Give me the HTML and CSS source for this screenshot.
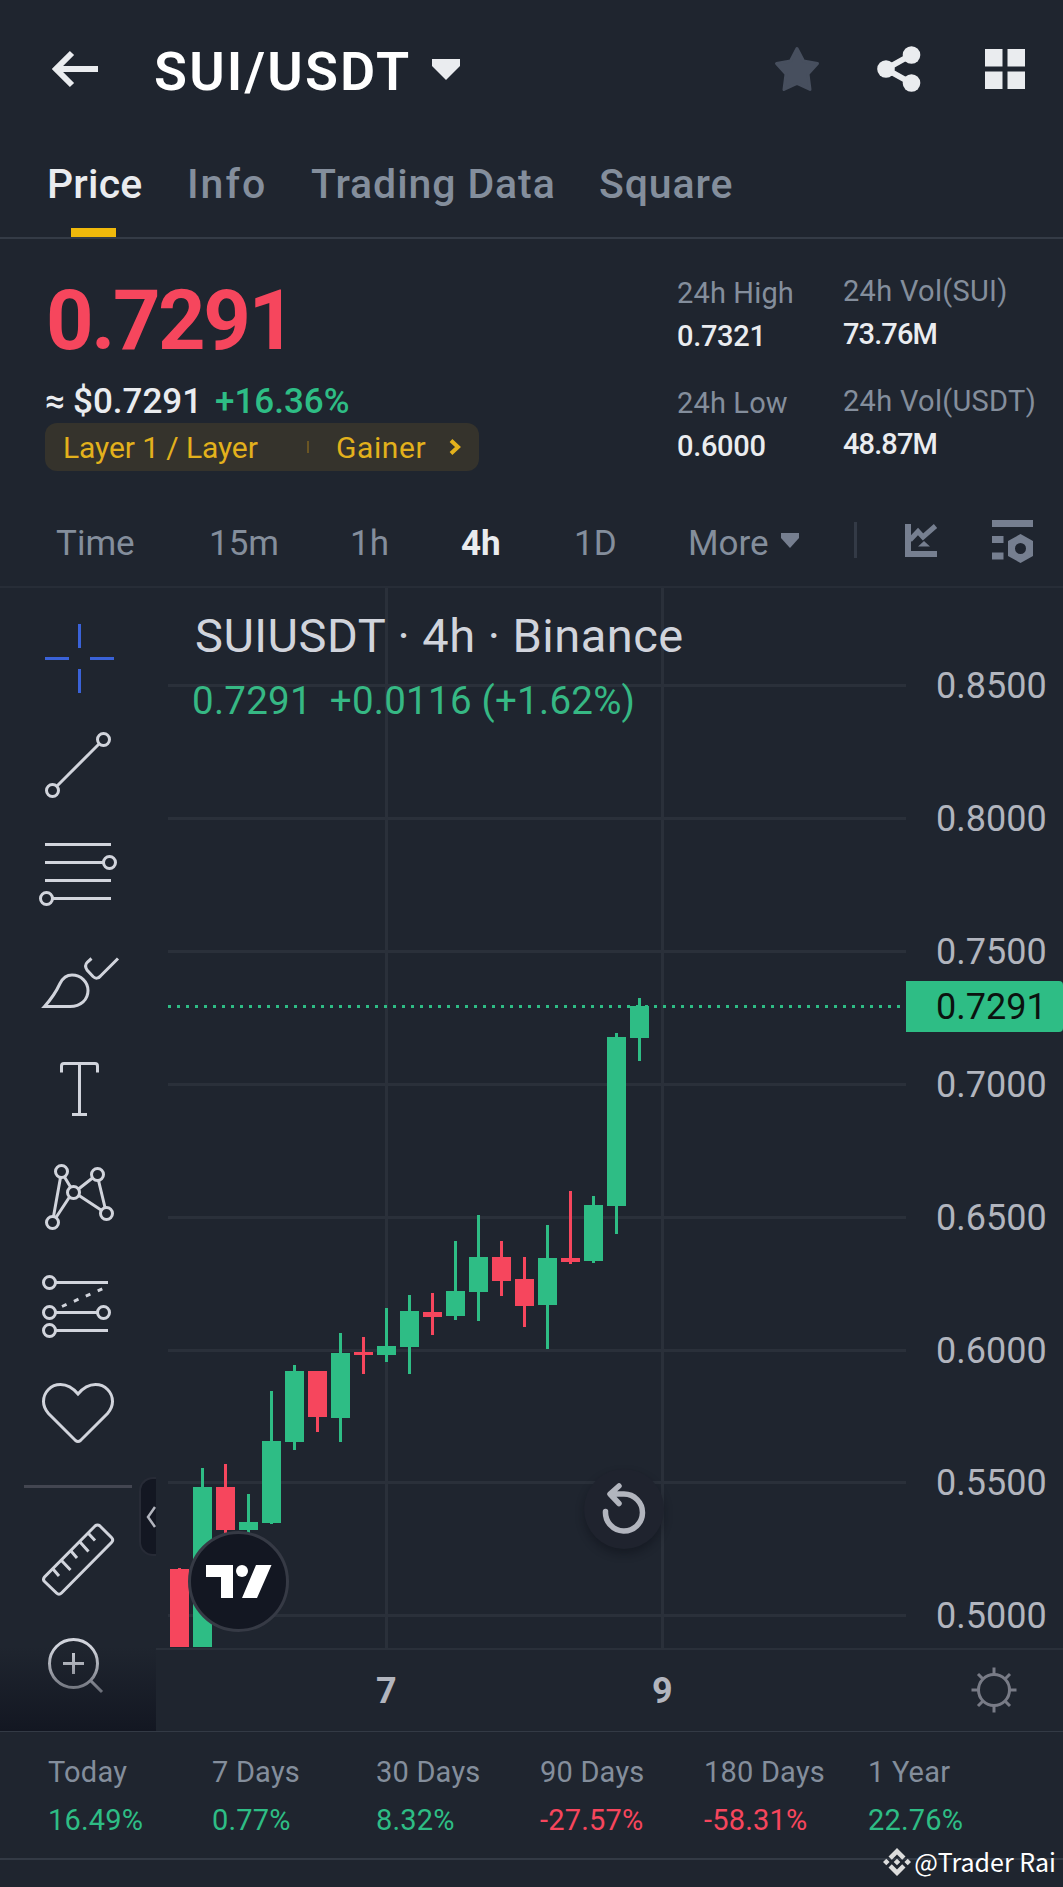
FILE: index.html
```html
<!DOCTYPE html>
<html lang="en">
<head>
    <meta charset="UTF-8">
    <meta name="viewport" content="width=device-width, initial-scale=1.0">
    <title>SUI/USDT</title>
    <link rel="stylesheet" href="styles.css">
</head>
<body>
    <header class="header">
        <svg class="back" width="46" height="38" viewBox="0 0 46 38">
            <path d="M46 19H5M20 3L4 19L20 35" />
        </svg>
        <h1 class="pair">SUI/USDT</h1>
        <svg class="caret" width="28" height="21" viewBox="0 0 28 21">
            <path d="M0 0H28V7L14 21L0 7Z" />
        </svg>
        <div class="header-icons">
            <svg class="star" width="46" height="46" viewBox="0 0 46 46">
                <path d="M23 2.500L29.500 15L43.500 17.500L34 28L36 43.500L23 37.500L10 43.500L12 28L2.500 17.500L16.500 15Z" />
            </svg>
            <svg class="share" width="44" height="46" viewBox="0 0 44 46">
                <path d="M34 9L9 23L34 37" />
                <circle cx="34.500" cy="9" r="8.800" />
                <circle cx="9" cy="23" r="8.800" />
                <circle cx="34.500" cy="37" r="8.800" />
            </svg>
            <svg class="grid-icon" width="40" height="40" viewBox="0 0 40 40">
                <path d="M0 0H17.500V17.500H0ZM22.500 0H40V17.500H22.500ZM0 22.500H17.500V40H0ZM22.500 22.500H40V40H22.500Z" />
            </svg>
        </div>
    </header>

    <nav class="tabs">
        <div class="tab active">Price</div>
        <div class="tab info">Info</div>
        <div class="tab">Trading Data</div>
        <div class="tab">Square</div>
    </nav>

    <section class="summary">
        <div class="quote">
            <div class="price">0.7291</div>
            <div class="fiat">
                <span>≈</span>
                <span>$0.7291</span>
                <span class="up">+16.36%</span>
            </div>
            <div class="tag">
                <span class="tag-name">Layer 1 / Layer</span>
                <span class="tag-line"></span>
                <span class="tag-gainer">Gainer</span>
                <svg width="12" height="16" viewBox="0 0 12 16"><path d="M2 1.500L9 8L2 14.500" /></svg>
            </div>
        </div>
        <div class="stats">
            <div class="label">24h High</div>
            <div class="value">0.7321</div>
            <div class="label">24h Low</div>
            <div class="value">0.6000</div>
        </div>
        <div class="stats volume">
            <div class="label">24h Vol(SUI)</div>
            <div class="value">73.76M</div>
            <div class="label">24h Vol(USDT)</div>
            <div class="value">48.87M</div>
        </div>
    </section>

    <section class="intervals">
        <span>Time</span>
        <span>15m</span>
        <span>1h</span>
        <span class="selected">4h</span>
        <span>1D</span>
        <span>More</span>
        <svg class="more-caret" width="18" height="15" viewBox="0 0 18 15"><path d="M0 0H18V5L9 15L0 5Z" /></svg>
        <i class="bar"></i>
        <svg class="chart-icon" width="33" height="33" viewBox="0 0 33 33">
            <path class="fill" d="M0 0H6V27H32V33H0Z" />
            <path class="line" d="M5 16L13 7.500L18 13L30.500 2" />
            <path class="fill" d="M19 17L25 22.500H13Z" />
        </svg>
        <svg class="settings-icon" width="42" height="44" viewBox="0 0 42 44">
            <path fill-rule="evenodd" d="M0 0H41V7H0ZM0 16H11.500V23H0ZM0 32.500H11.500V39.500H0ZM28.500 14L41 21V36L28.500 43L16 36V21ZM28.500 23A5.500 5.500 0 1 0 28.500 34A5.500 5.500 0 1 0 28.500 23Z" />
        </svg>
    </section>

    <main class="chart">
        <aside class="toolbar">
            <!-- Crosshair -->
            <svg class="tool cross" viewBox="0 0 156 108"><path d="M45 54.500H69M90 54.500H114M79.500 20V44M79.500 65V89" /></svg>
            <!-- Trend line -->
            <svg class="tool" viewBox="0 0 156 108">
                <path d="M57 74L99 32" /><circle cx="103.500" cy="27.500" r="6" /><circle cx="52.500" cy="78.500" r="6" />
            </svg>
            <!-- Fibonacci -->
            <svg class="tool" viewBox="0 0 156 108">
                <path d="M45 24.500H111M45 42.500H103.500M45 60.500H111M52.500 78.500H111" /><circle cx="109.500" cy="42.500" r="6" /><circle cx="46.500" cy="78.500" r="6" />
            </svg>
            <!-- Brush -->
            <svg class="tool" viewBox="0 0 156 108">
                <path d="M44.500 78.500C54 68 57 62 60 55.500C63 49.500 67 47 72 47C81 47 88 54 88 62.500C88 71.500 81 78.500 70 78.500Z" />
                <path d="M91.500 30.500L87.500 34C85.500 36 85 39 87 42L93 48.500C95.500 51 98.500 50.500 100.500 48L118 30.500" />
            </svg>
            <!-- Text -->
            <svg class="tool" viewBox="0 0 156 108"><path d="M61.500 36.500V30Q61.500 27.500 64 27.500H95Q97.500 27.500 97.500 30V36.500M79.500 27.500V78.500M72 78.500H87" /></svg>
            <!-- Pattern -->
            <svg class="tool" viewBox="0 0 156 108">
                <path d="M60.500 33.500L53.500 72.500M64.500 33L70.500 43M69.500 53L56 73.500M78.500 45L92.500 34M98.500 36.500L105 63.500M79 51.500L101 66" />
                <circle cx="61.500" cy="27.500" r="6" /><circle cx="97.500" cy="30.500" r="6" /><circle cx="73.500" cy="48.500" r="6" /><circle cx="52.500" cy="78.500" r="6" /><circle cx="106.500" cy="69.500" r="6" />
            </svg>
            <!-- Forecast -->
            <svg class="tool" viewBox="0 0 156 108">
                <path d="M55.500 30.500H108M55.500 60.500H97.500M55.500 78.500H108" />
                <path stroke-dasharray="5 8" d="M62 54.500L104 36" />
                <circle cx="49.500" cy="30.500" r="6" /><circle cx="49.500" cy="60.500" r="6" /><circle cx="103.500" cy="60.500" r="6" /><circle cx="49.500" cy="78.500" r="6" />
            </svg>
            <!-- Heart -->
            <svg class="tool" viewBox="0 0 156 108">
                <path d="M78 34C73 28 67.500 24.500 60.500 24.500C51 24.500 43.500 32 43.500 41.500C43.500 46 45.500 50 48.500 53.500L75.500 80.500Q78 82.500 80.500 80.500L107.500 53.500C110.500 50 112.500 46 112.500 41.500C112.500 32 105 24.500 95.500 24.500C88.500 24.500 83 28 78 34Z" />
            </svg>
            <hr class="tool-line">
            <!-- Ruler -->
            <svg class="tool" viewBox="0 0 156 108">
                <path d="M95 20Q97.500 18 100 20L111.500 31.500Q114 34 111.500 36.500L61.500 87Q59 89.500 56.500 87L44.500 75.500Q42.500 73.500 44.500 71Z" />
                <path d="M88.500 27.500L95 34.500M80 36L88.500 45.500M71 45L77 52M61.500 54.500L70.500 64M53 63L59 70" />
            </svg>
            <!-- Zoom in -->
            <svg class="tool" viewBox="0 0 156 108">
                <circle cx="73.500" cy="49.500" r="24" /><path d="M63 49.500H84M73.500 39V60M91 67L102 78" />
            </svg>
            <div class="fade"></div>
            <div class="handle">
                <svg width="10" height="22" viewBox="0 0 10 22"><path d="M9 1L2 11L9 21" /></svg>
            </div>
        </aside>

        <div class="board">
            <div class="plot-row">
                <div class="plot">
                    <svg id="plot" width="750" height="1062" viewBox="156 586 750 1062"></svg>
                    <div class="legend">
                        <div class="legend-title">SUIUSDT · 4h · Binance</div>
                        <div class="legend-values"><span>0.7291</span><span>+0.0116 (+1.62%)</span></div>
                    </div>
                    <div class="tv-logo">
                        <svg width="66" height="33" viewBox="0 0 66 33">
                            <path d="M0 0H27V33H15V12H0ZM50 0H65.500L51 33H36Z" /><circle cx="36" cy="6" r="6" />
                        </svg>
                    </div>
                    <div class="reset">
                        <svg width="44" height="52" viewBox="0 0 44 52">
                            <path d="M3.500 28.500A18.500 18.500 0 1 0 22 11H9M17 3L8 11L17 20.500" />
                        </svg>
                    </div>
                </div>
                <div class="scale">
                    <span>0.8500</span>
                    <span>0.8000</span>
                    <span>0.7500</span>
                    <span>0.7000</span>
                    <span>0.6500</span>
                    <span>0.6000</span>
                    <span>0.5500</span>
                    <span>0.5000</span>
                    <div class="last-price">0.7291</div>
                </div>
            </div>
            <div class="time-row">
                <b>7</b>
                <b>9</b>
                <svg width="46" height="46" viewBox="0 0 46 46">
                    <circle cx="23" cy="23" r="15.500" />
                    <path d="M23 0.500V8M23 38V45.500M0.500 23H8M38 23H45.500M7 7L12 12M34 34L39 39M39 7L34 12M12 34L7 39" />
                </svg>
            </div>
        </div>
    </main>

    <section class="performance">
        <div><div class="label">Today</div><div class="up">16.49%</div></div>
        <div><div class="label">7 Days</div><div class="up">0.77%</div></div>
        <div><div class="label">30 Days</div><div class="up">8.32%</div></div>
        <div><div class="label">90 Days</div><div class="down">-27.57%</div></div>
        <div><div class="label">180 Days</div><div class="down">-58.31%</div></div>
        <div><div class="label">1 Year</div><div class="up">22.76%</div></div>
    </section>

    <div class="author">
        <svg width="28" height="28" viewBox="0 0 28 28">
            <path d="M14 0L22.500 8.500L19.200 11.800L14 6.600L8.800 11.800L5.500 8.500ZM14 28L22.500 19.500L19.200 16.200L14 21.400L8.800 16.200L5.500 19.500ZM3.300 10.700L6.600 14L3.300 17.300L0 14ZM24.700 10.700L28 14L24.700 17.300L21.400 14ZM14 10.700L17.300 14L14 17.300L10.700 14Z" />
        </svg>
        <span>@Trader Rai</span>
    </div>

    <script>
        const GREEN = '#2ebd85';
        const RED = '#f6465d';

        // [color, high, body top, body bottom, low]
        const candles = [
            [RED, 1568, 1569, 1647, 1647],
            [GREEN, 1468, 1487, 1647, 1647],
            [RED, 1464, 1487, 1530, 1535],
            [GREEN, 1494, 1522, 1530, 1534],
            [GREEN, 1391, 1441, 1523, 1524],
            [GREEN, 1365, 1371, 1442, 1450],
            [RED, 1371, 1371, 1417, 1432],
            [GREEN, 1333, 1353, 1418, 1442],
            [RED, 1337, 1352, 1355, 1374],
            [GREEN, 1308, 1346, 1355, 1362],
            [GREEN, 1295, 1311, 1347, 1374],
            [RED, 1293, 1312, 1317, 1335],
            [GREEN, 1241, 1291, 1316, 1320],
            [GREEN, 1215, 1257, 1292, 1321],
            [RED, 1241, 1257, 1281, 1296],
            [RED, 1257, 1279, 1306, 1327],
            [GREEN, 1225, 1258, 1305, 1349],
            [RED, 1191, 1258, 1262, 1264],
            [GREEN, 1196, 1205, 1261, 1263],
            [GREEN, 1033, 1037, 1206, 1234],
            [GREEN, 998, 1006, 1038, 1061]
        ];

        let shapes = '';

        // Grid lines
        for (let i = 0; i < 8; i++) {
            const y = 684 + Math.round(i * 132.9);
            shapes += `<rect class="grid" x="168" y="${y}" width="738" height="3"/>`;
        }
        for (const x of [385, 661]) {
            shapes += `<rect class="grid" x="${x}" y="588" width="3" height="1060"/>`;
        }

        // Last price line
        shapes += `<path stroke="${GREEN}" stroke-width="3" stroke-dasharray="3 6" d="M168 1006.5H902"/>`;

        // Candles
        candles.forEach(([color, high, top, bottom, low], i) => {
            const x = 170 + i * 23;
            shapes += `<rect x="${x + 8}" y="${high}" width="3" height="${low - high}" fill="${color}"/>`;
            shapes += `<rect x="${x}" y="${top}" width="19" height="${bottom - top}" fill="${color}"/>`;
        });

        document.getElementById('plot').innerHTML = shapes;
    </script>
</body>
</html>
```
FILE: styles.css
```css
* {
    margin: 0;
    padding: 0;
    box-sizing: border-box;
}

body {
    position: relative;
    width: 1063px;
    height: 1887px;
    overflow: hidden;
    background: #1f252f;
    color: #eaecef;
    font-family: Roboto, "Liberation Sans", sans-serif;
}

svg {
    display: block;
    flex: none;
}

.up { color: #2ebd85; }
.down { color: #f6465d; }
.label { color: #848e9c; }

/* Header */
.header {
    display: flex;
    align-items: center;
    height: 138px;
    padding: 0 38px 0 52px;
}

.back path {
    fill: none;
    stroke: #eaecef;
    stroke-width: 6;
}

.pair {
    margin: 6px 0 0 56px;
    font-size: 54px;
    line-height: 60px;
    font-weight: 600;
    letter-spacing: 2.2px;
    color: #fff;
}

.caret {
    margin-left: 21px;
    fill: #eaecef;
}

.header-icons {
    display: flex;
    align-items: center;
    margin-left: auto;
}

.star {
    fill: #474f5e;
    stroke: #474f5e;
    stroke-width: 3;
    stroke-linejoin: round;
    margin-right: 57px;
}

.share {
    fill: #eaecef;
    margin-right: 64px;
}

.share path {
    fill: none;
    stroke: #eaecef;
    stroke-width: 6;
}

.grid-icon { fill: #eaecef; }

/* Tabs */
.tabs {
    display: grid;
    grid-template-columns: 140px 124px 288px auto;
    height: 101px;
    padding-left: 47px;
    border-bottom: 2px solid #343b46;
}

.tab {
    position: relative;
    font-size: 41px;
    line-height: 92px;
    font-weight: 500;
    letter-spacing: 0.9px;
    color: #848e9c;
}

.tab.info { letter-spacing: 2px; }

.tab.active {
    color: #eaecef;
    letter-spacing: 0.2px;
}

.tab.active::after {
    content: "";
    position: absolute;
    left: 24px;
    bottom: 0;
    width: 45px;
    height: 9px;
    background: #f0b90b;
}

/* Price and 24h stats */
.summary {
    display: flex;
    height: 260px;
    padding: 32px 0 0 45px;
}

.quote { width: 632px; }

.price {
    padding-left: 1px;
    font-size: 83px;
    line-height: 100px;
    font-weight: 700;
    letter-spacing: -2.4px;
    color: #f6465d;
}

.fiat {
    display: grid;
    grid-template-columns: 28px 142px auto;
    margin-top: 9px;
    font-size: 35px;
    line-height: 44px;
    font-weight: 500;
}

.tag {
    display: flex;
    align-items: center;
    width: 434px;
    height: 48px;
    margin-top: -1px;
    padding-left: 18px;
    border-radius: 12px;
    background: #35332c;
    color: #e3b11c;
    font-size: 30px;
}

.tag-name {
    width: 244px;
    letter-spacing: -0.1px;
}

.tag-line {
    width: 2px;
    height: 12px;
    margin-right: 27px;
    background: #6a5523;
}

.tag-gainer {
    width: 113px;
    letter-spacing: 0.6px;
}

.tag svg path {
    fill: none;
    stroke: #e3b11c;
    stroke-width: 4;
}

.stats {
    width: 166px;
    padding-top: 1px;
    font-size: 29px;
    line-height: 43px;
    white-space: nowrap;
    letter-spacing: 0.15px;
}

.stats .value {
    margin-bottom: 24px;
    font-weight: 500;
    letter-spacing: -0.3px;
}

.volume {
    margin-top: -2px;
    letter-spacing: 0.3px;
}

.volume .value { letter-spacing: -0.9px; }

/* Interval picker */
.intervals {
    display: grid;
    grid-template-columns: 153px 141px 111px 113px 114px 93px 73px 51px 87px auto;
    align-items: center;
    height: 87px;
    padding-left: 56px;
    font-size: 35px;
    color: #848e9c;
}

.intervals span { padding-top: 1px; }

.intervals .selected {
    font-weight: 700;
    color: #eaecef;
}

.more-caret {
    fill: #767f90;
    margin-bottom: 5px;
}

.bar {
    width: 3px;
    height: 36px;
    margin-bottom: 5px;
    background: #333a46;
}

.chart-icon {
    margin-bottom: 5px;
}

.chart-icon .fill { fill: #767f90; }

.chart-icon .line {
    fill: none;
    stroke: #767f90;
    stroke-width: 5;
}

.settings-icon {
    fill: #767f90;
    margin-bottom: 2px;
}

/* Chart */
.chart {
    display: flex;
    height: 1145px;
    border-top: 2px solid #272d37;
}

.toolbar {
    position: relative;
    width: 156px;
    padding-top: 16px;
}

.tool {
    width: 156px;
    height: 108px;
    fill: none;
    stroke: #d1d4dc;
    stroke-width: 3;
}

.tool.cross { stroke: #3a62d8; }

.tool-line {
    width: 108px;
    height: 3px;
    margin: 17px 0 18px 24px;
    border: none;
    background: #434651;
}

/* Fades the tools out at the bottom of the list */
.fade {
    position: absolute;
    left: 0;
    bottom: 0;
    width: 156px;
    height: 84px;
    background: linear-gradient(rgba(19, 23, 34, 0), #131722);
}

.handle {
    position: absolute;
    right: 0;
    top: 889px;
    display: flex;
    align-items: center;
    justify-content: flex-end;
    width: 17px;
    height: 79px;
    border: 2px solid #272b36;
    border-right: none;
    border-radius: 14px 0 0 14px;
    background: #131722;
}

.handle path {
    fill: none;
    stroke: #b2b5be;
    stroke-width: 2.5;
}

.board {
    flex: 1;
    display: flex;
    flex-direction: column;
}

.plot-row {
    display: flex;
    height: 1062px;
    border-bottom: 2px solid #2a303a;
}

.plot {
    position: relative;
    width: 750px;
}

.plot svg { overflow: hidden; }

#plot {
    margin-top: -2px;
    fill: none;
}

.grid { fill: #2a303a; }

.legend {
    position: absolute;
    left: 36px;
    top: 20px;
    white-space: nowrap;
}

.legend-title {
    padding-left: 3px;
    font-size: 47px;
    line-height: 56px;
    letter-spacing: 0.48px;
    color: #d1d4dc;
}

.legend-values {
    display: flex;
    gap: 18px;
    padding: 11px 0 0 0;
    font-size: 38.5px;
    line-height: 52px;
    letter-spacing: 0.25px;
    color: #36b884;
}

.tv-logo {
    position: absolute;
    left: 32px;
    top: 943px;
    display: flex;
    align-items: center;
    justify-content: center;
    width: 101px;
    height: 101px;
    border: 3px solid #363a45;
    border-radius: 50%;
    background: #131722;
    fill: #fff;
}

.reset {
    position: absolute;
    left: 428px;
    top: 881px;
    display: flex;
    align-items: center;
    justify-content: center;
    width: 80px;
    height: 80px;
    border-radius: 50%;
    background: #1f232e;
    box-shadow: 0 5px 8px rgba(10, 12, 20, 0.4);
}

.reset path {
    fill: none;
    stroke: #b2b5be;
    stroke-width: 5.5;
    stroke-linecap: round;
    stroke-linejoin: round;
}

/* Price scale */
.scale {
    position: relative;
    flex: 1;
    padding-top: 32px;
    font-size: 36px;
    line-height: 132.9px;
    color: #b2b5be;
}

.scale span {
    display: block;
    padding-left: 30px;
}

.last-price {
    position: absolute;
    left: 0;
    top: 393px;
    width: 157px;
    height: 51px;
    padding-left: 30px;
    border-radius: 0 4px 4px 0;
    background: #2ebd85;
    color: #0b120f;
    line-height: 53px;
}

/* Time scale */
.time-row {
    flex: 1;
    display: grid;
    grid-template-columns: 276px 293px auto;
    align-items: center;
    padding-left: 220px;
    font-size: 36px;
    color: #b2b5be;
}

.time-row svg {
    margin: 0 0 2px 26px;
    fill: none;
    stroke: #787b86;
    stroke-width: 3;
}

/* Performance */
.performance {
    display: grid;
    grid-template-columns: repeat(6, 164px);
    height: 129px;
    padding: 16px 0 0 48px;
    border-top: 1px solid #333a45;
    border-bottom: 2px solid #333a45;
    font-size: 29px;
    line-height: 48px;
    letter-spacing: 0.2px;
}

/* Author mark */
.author {
    position: absolute;
    right: 7px;
    bottom: 8px;
    display: flex;
    align-items: center;
    gap: 3px;
    font-family: "Noto Sans CJK SC", "Noto Sans", sans-serif;
    font-size: 25px;
    line-height: 36px;
    color: #fff;
}

.author svg {
    margin-top: 2px;
    fill: #dcdcdc;
}
```
